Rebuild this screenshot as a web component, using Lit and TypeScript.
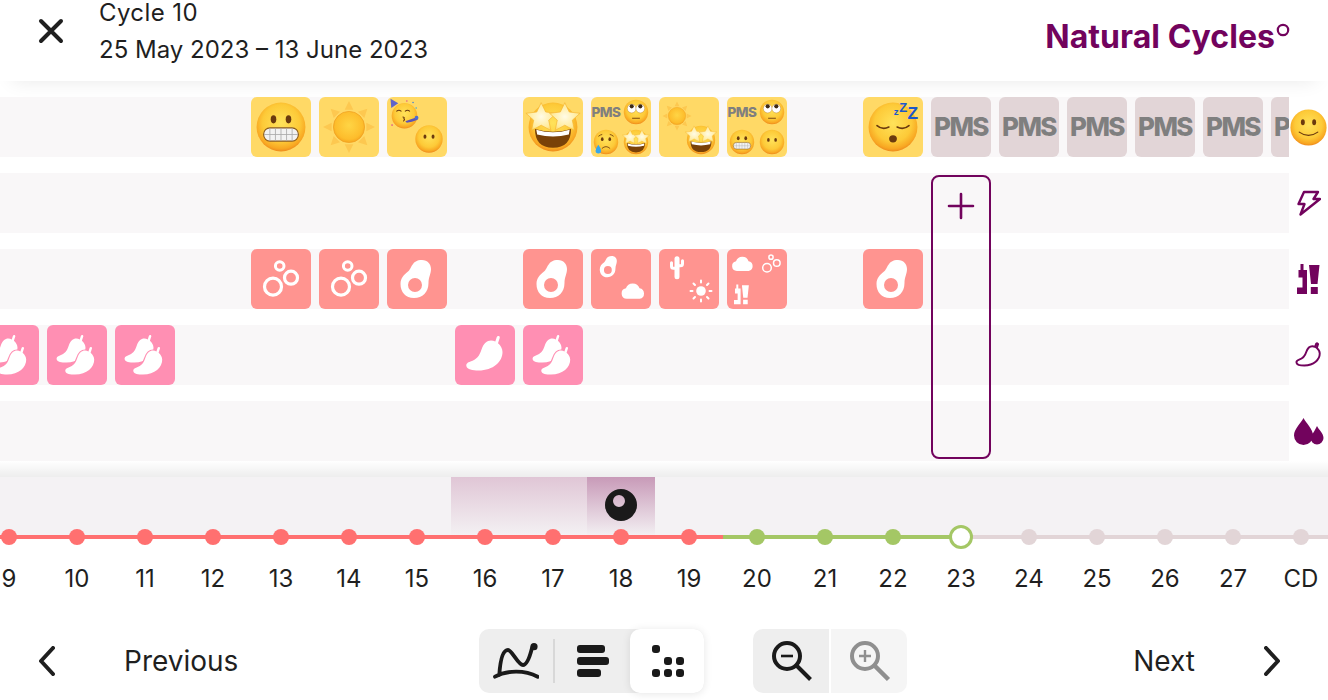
import { LitElement, html, svg, css } from "lit";
import { customElement } from "lit/decorators.js";

const FACE = "url(#face)";
const eyes = svg`<ellipse cx="12.6" cy="12.5" rx="2" ry="2.9" fill="#6b3a0e"/><ellipse cx="23.4" cy="12.5" rx="2" ry="2.9" fill="#6b3a0e"/>`;
const disc = svg`<circle cx="18" cy="18" r="17.6" fill="${FACE}"/>`;
const star = (cx: number, cy: number) => svg`<path transform="translate(${cx} ${cy})" d="M0-10.5 3.2-3.8 11-2.9 5.4 2.1 7 9.500 0 5.700-7 9.500-5.400 2.100-11-2.900-3.200-3.800Z" fill="url(#star)" stroke="#f7b733" stroke-width=".5" stroke-linejoin="round"/>`;

const EMOJI: Record<string, unknown> = {
  grimace: svg`${disc}${eyes}<rect x="5.5" y="18.6" width="25" height="9.6" rx="4.6" fill="#f2f2f2" stroke="#8a5a1a" stroke-width=".8"/><path d="M5.8 23.4h24.4M10 18.8v9.2M14 18.7v9.4M18 18.7v9.4M22 18.7v9.4M26 18.8v9.2" stroke="#a9a9a9" stroke-width=".6"/>`,
  sun: svg`<g fill="#fdc850"><path d="M18 0 21 6H15ZM18 36 15 30H21ZM0 18 6 15V21ZM36 18 30 21V15ZM5.3 5.3 11.8 7.4 7.4 11.8ZM30.7 30.7 24.2 28.6 28.6 24.2ZM30.7 5.3 28.6 11.8 24.2 7.4ZM5.3 30.7 7.4 24.2 11.8 28.6Z"/></g><circle cx="18" cy="18" r="10.8" fill="url(#sun)" stroke="#f0a020" stroke-width=".5"/>`,
  blank: svg`${disc}<ellipse cx="12.8" cy="15" rx="1.9" ry="2.7" fill="#6b3a0e"/><ellipse cx="23.2" cy="15" rx="1.9" ry="2.7" fill="#6b3a0e"/>`,
  party: svg`<circle cx="18" cy="19" r="16.5" fill="${FACE}"/><path d="M8 13q2.8-2.4 5.6 0M19 13q2.8-2.4 5.6 0" fill="none" stroke="#6b3a0e" stroke-width="1.3" stroke-linecap="round"/><path d="M16 20.5q3 1 1 2.4q2.4 1 -.4 2.8" fill="none" stroke="#6b3a0e" stroke-width="1.3" stroke-linecap="round"/><path d="M0 -3 10 3 1 9Z" fill="#5f63c9"/><path d="M19 26q6-2 15-5l1 3q-8 3-14 4Z" fill="#5c55b5"/><circle cx="33.5" cy="21.5" r="2.4" fill="#4d6ed0"/><circle cx="29" cy="2" r="1" fill="#3a84d8"/><circle cx="21" cy="0" r="1" fill="#e0588a"/><circle cx="2" cy="31" r="1" fill="#d8389a"/><circle cx="33" cy="9" r="1" fill="#3fa8d8"/>`,
  starry: svg`${disc}<path d="M5 19.500q13 4 26 0Q31 33 18 33T5 19.500Z" fill="#7a4208"/><path d="M6 20q12 3.600 24 0l-.6 3.400q-11.400 2.800-22.800 0Z" fill="#fff"/>${star(9.5, 11)}${star(26.5, 11)}`,
  roll: svg`${disc}<circle cx="11.800" cy="13" r="6.300" fill="#fff" stroke="#a86a1a" stroke-width=".5"/><circle cx="24.200" cy="13" r="6.300" fill="#fff" stroke="#a86a1a" stroke-width=".5"/><circle cx="11.800" cy="9.800" r="3" fill="#3e2a14"/><circle cx="24.200" cy="9.800" r="3" fill="#3e2a14"/><path d="M13 27h10" stroke="#6b3a0e" stroke-width="1.300" stroke-linecap="round"/>`,
  cry: svg`${disc}<ellipse cx="12.600" cy="14" rx="1.900" ry="2.700" fill="#6b3a0e"/><ellipse cx="23.400" cy="14" rx="1.900" ry="2.700" fill="#6b3a0e"/><path d="M7.500 9.500q2.500-2 4.500-2.300M28.500 9.500q-2.500-2-4.500-2.300M12.500 27q5.500-5 11 0" fill="none" stroke="#6b3a0e" stroke-width="1.200" stroke-linecap="round"/><path d="M7 22q4 5.500 4 8.500a4 4 0 0 1-8 0Q3 27.500 7 22Z" fill="#36a6ea"/>`,
  sleep: svg`${disc}<path d="M6.500 17q4 3.400 8.500 1M29.500 17q-4 3.400-8.500 1" fill="none" stroke="#6b3a0e" stroke-width="1.200" stroke-linecap="round"/><ellipse cx="18" cy="26.500" rx="2.800" ry="2.600" fill="#6b3a0e"/><text class="zzz" x="18.500" y="9.500" font-size="7">z</text><text class="zzz" x="22.500" y="7.500" font-size="9.500">Z</text><text class="zzz" x="28.500" y="12" font-size="12.500">Z</text>`,
  smile: svg`${disc}<ellipse cx="12.500" cy="12.800" rx="1.900" ry="2.900" fill="#6b3a0e"/><ellipse cx="23.500" cy="12.800" rx="1.900" ry="2.900" fill="#6b3a0e"/><path d="M9 22.500q9 6.500 18 0" fill="none" stroke="#6b3a0e" stroke-width="1.200" stroke-linecap="round"/>`,
};

const em = (name: string, cx: number, cy: number, size: number) =>
  svg`<g transform="translate(${cx - size / 2} ${cy - size / 2}) scale(${size / 36})">${EMOJI[name]}</g>`;

const AVOCADO = "M35 11c5.500 0 9 4 9 9 0 5-2.500 8-2.500 14 0 9-6 15-14.500 15s-13.500-6-13.500-14c0-6 3.500-9.500 7.500-12.500 4-3 3.500-11.500 14-11.500zM28 29a7 7 0 1 0 0 14 7 7 0 0 0 0-14z";
const CHILI = "M11.500 41.500c-.8-2.500 1-4 4-5 6-2 9-5.500 11-12 2-6 5.500-9 9.500-9 1.500 0 3 .4 4.300 1.100l1.500-4.700c.3-.8 1.200-1.200 2-.9s1.200 1.200.9 2l-1.700 5.200c2.700 2.200 4.500 5.300 4.500 8.800 0 9.500-9 18.500-24 18.500-6 0-11.300-1.400-12-4z";
const CLOUD = "M5.500 17a5.500 5.500 0 0 1-.9-10.900A7.500 7.500 0 0 1 18.800 6 5.600 5.600 0 0 1 19 17z";
const BOTTLE = "M3.500 0h3v6H10v24H0v-6.500h5.500V13.500H1.500V6h2zM12 1h10.500l-2 19h-6.500zM13.800 23h7v7h-7z";

const ic = {
  bubbles: svg`<g fill="none" stroke="#fff"><circle cx="22" cy="37.700" r="8.500" stroke-width="3.200"/><circle cx="40" cy="28.700" r="6.500" stroke-width="3.200"/><circle cx="28.700" cy="17" r="4.300" stroke-width="3"/></g>`,
  avocado: svg`<path d="${AVOCADO}" fill="#fff" fill-rule="evenodd"/>`,
  chili: svg`<path d="${CHILI}" fill="#fff"/>`,
  chili2: svg`<path d="${CHILI}" fill="#fff" transform="translate(.5 1.200) scale(.8)"/><path d="${CHILI}" fill="#fff" stroke="#ff8fb3" stroke-width="3" paint-order="stroke" transform="translate(9.200 13.200) scale(.8)"/>`,
  cloudSmall: svg`<path d="${CLOUD}" fill="#fff" transform="translate(30.500 33.500) scale(.96)"/>`,
  avoSmall: svg`<path d="${AVOCADO}" fill="#fff" fill-rule="evenodd" transform="translate(1.200 .8) scale(.56)"/>`,
  cactus: svg`<g transform="translate(10.500 7.800)" fill="none" stroke="#fff" stroke-linecap="round"><path d="M7.500 2v18" stroke-width="5"/><path d="M2 6v3.500a2 2 0 0 0 2 2h3M13 4v3a2 2 0 0 1-2 2H8" stroke-width="3"/></g>`,
  sunSmall: svg`<g transform="translate(42 42)"><circle r="4.800" fill="#fff"/><g stroke="#fff" stroke-width="2" stroke-linecap="round"><path d="M0-8.500v-2M0 8.500v2M-8.500 0h-2M8.500 0h2M-6-6l-1.500-1.500M6 6l1.500 1.500M6-6l1.500-1.500M-6 6l-1.500 1.500"/></g></g>`,
  cloudTop: svg`<path d="${CLOUD}" fill="#fff" transform="translate(5 7) scale(.88)"/>`,
  bubblesSmall: svg`<g fill="none" stroke="#fff" stroke-width="1.500"><circle cx="40" cy="18.800" r="4.300"/><circle cx="49.800" cy="14" r="3.300"/><circle cx="44" cy="8.200" r="2.100"/></g>`,
  bottle: svg`<path d="${BOTTLE}" fill="#fff" transform="translate(7 35.500) scale(.66)"/>`,
};

type Cell = { kind: string; art?: unknown };
const Y = "yellow", P = "pms", R = "red", K = "pink";
const pmsSmall = svg`<text class="pms-small" x="15" y="19.500" text-anchor="middle">PMS</text>`;

const mood: Record<number, Cell> = {
  13: { kind: Y, art: em("grimace", 30, 30, 50) },
  14: { kind: Y, art: em("sun", 30, 30, 52) },
  15: { kind: Y, art: svg`${em("party", 17.5, 18, 28)}${em("blank", 42, 42, 28)}` },
  17: { kind: Y, art: svg`${em("starry", 30, 30, 50)}` },
  18: { kind: Y, art: svg`${pmsSmall}${em("roll", 45, 15, 25)}${em("cry", 15, 45, 25)}${em("starry", 45, 45, 25)}` },
  19: { kind: Y, art: svg`${em("sun", 18, 19, 29)}${em("starry", 42, 43, 29)}` },
  20: { kind: Y, art: svg`${pmsSmall}${em("roll", 45, 15, 25)}${em("grimace", 15, 45, 25)}${em("blank", 45, 45, 25)}` },
  22: { kind: Y, art: em("sleep", 30, 30, 50) },
  23: { kind: P }, 24: { kind: P }, 25: { kind: P }, 26: { kind: P }, 27: { kind: P }, 28: { kind: P },
};
const notes: Record<number, Cell> = {
  13: { kind: R, art: ic.bubbles },
  14: { kind: R, art: ic.bubbles },
  15: { kind: R, art: ic.avocado },
  17: { kind: R, art: ic.avocado },
  18: { kind: R, art: svg`${ic.avoSmall}${ic.cloudSmall}` },
  19: { kind: R, art: svg`${ic.cactus}${ic.sunSmall}` },
  20: { kind: R, art: svg`${ic.cloudTop}${ic.bubblesSmall}${ic.bottle}` },
  22: { kind: R, art: ic.avocado },
};
const libido: Record<number, Cell> = {
  9: { kind: K, art: ic.chili2 }, 10: { kind: K, art: ic.chili2 }, 11: { kind: K, art: ic.chili2 },
  16: { kind: K, art: ic.chili }, 17: { kind: K, art: ic.chili2 },
};
const rows: Record<number, Cell>[] = [mood, {}, notes, libido, {}];
const DAYS = Array.from({ length: 20 }, (_, i) => 9 + i);

@customElement("app-root")
export class AppRoot extends LitElement {
  static styles = css`
    :host { display: flex; flex-direction: column; width: 1328px; height: 700px; overflow: hidden; background: #fff;
      font-family: Inter, "Liberation Sans", sans-serif; color: #1f1f1f; }
    .defs { width: 0; height: 0; position: absolute; }
    header { height: 81px; flex: none; display: flex; align-items: flex-start; background: #fff; position: relative; z-index: 2;
      box-shadow: 0 12px 18px -12px rgba(0,0,0,.09); }
    .close { width: 30px; height: 30px; margin: 16px 33px 0 36px; flex: none; }
    .title { font-size: 24px; white-space: nowrap; }
    .title .t1 { line-height: 26px; letter-spacing: .4px; }
    .title .t2 { line-height: 36px; margin-top: 6px; }
    .logo { margin-left: auto; margin-right: 38px; margin-top: 18px; display: flex; align-items: flex-start; color: #72035d;
      font-size: 32px; font-weight: 700; line-height: 38px; white-space: nowrap; letter-spacing: .05px; }
    .logo svg { width: 14px; height: 14px; margin: 5px 0 0 1px; }
    main { flex: none; height: 380px; padding-top: 16px; box-sizing: border-box; display: grid; grid-template-columns: 1289px 39px; }
    .rows { position: relative; display: flex; flex-direction: column; gap: 16px; overflow: hidden; }
    .row { height: 60px; background: #f9f7f8; }
    .track { display: flex; gap: 8px; margin-left: -21px; }
    .slot { width: 60px; height: 60px; flex: none; }
    .cell { width: 60px; height: 60px; border-radius: 6px; display: block; }
    .yellow { background: #ffd966; }
    .pms { background: #e2d5d7; }
    .red { background: #ff9490; }
    .pink { background: #ff8fb3; }
    .pms-text { font-size: 26px; font-weight: 800; fill: #7f7f7f; letter-spacing: -1.600px; }
    .pms-small { font-size: 13.500px; font-weight: 800; fill: #7f7f7f; letter-spacing: -.5px; }
    .zzz { font-weight: 700; fill: #1c57c9; font-family: "Liberation Sans", sans-serif; }
    .selected { position: absolute; left: 931px; top: 78px; width: 60px; height: 284px; box-sizing: border-box; border: 2px solid #72035d;
      border-radius: 8px; display: flex; justify-content: center; padding-top: 15px; }
    .selected svg { width: 28px; height: 28px; }
    .side { display: flex; flex-direction: column; gap: 16px; }
    .side div { height: 60px; display: flex; align-items: center; justify-content: center; color: #72035d; }
    .strip { height: 16px; flex: none; background: linear-gradient(to bottom, rgba(0,0,0,0), rgba(0,0,0,.07)); }
    .timeline { display: flex; margin-left: -25px; flex: none; }
    .day { width: 68px; flex: none; display: flex; flex-direction: column; align-items: center; }
    .band { width: 100%; height: 60px; background: #f4f2f4; display: flex; align-items: center; justify-content: center; }
    .band.fert { background: linear-gradient(to bottom, #e0c6d6, #f4f2f4); }
    .band.ovu { background: linear-gradient(to bottom, #c89ab8, #f4f2f4); }
    .band svg { width: 32px; height: 32px; margin-top: -4px; }
    .axis { width: 100%; height: 4px; margin-top: -2px; display: flex; align-items: center; justify-content: center; }
    .axis i { width: 16px; height: 16px; border-radius: 50%; flex: none; }
    .axis i.now { width: 24px; height: 24px; box-sizing: border-box; background: #fff; border: 3px solid #a4c765; }
    .a-red { background: #ff7070; }
    .a-green { background: #a4c765; }
    .a-grey { background: #e2d5d7; }
    .axis.half { background: linear-gradient(to right, #a4c765 50%, #e2d5d7 50%); }
    .label { margin-top: 25px; height: 30px; line-height: 30px; font-size: 24px; text-align: center; white-space: nowrap; }
    footer { margin-top: 35px; flex: none; height: 64px; display: flex; align-items: center; font-size: 28px; }
    .prev { width: 479px; padding-left: 39px; box-sizing: border-box; display: flex; align-items: center; gap: 69px; flex: none; }
    .chev { width: 16px; height: 30px; flex: none; }
    .seg { width: 225px; height: 64px; border-radius: 10px; background: #eeeeee; display: flex; align-items: stretch; flex: none; margin-right: 49px; }
    .seg > div { display: flex; align-items: center; justify-content: center; }
    .seg .a { width: 74px; }
    .seg .line { width: 2px; margin: 10px 0; background: #d8d8d8; flex: none; }
    .seg .b { width: 75px; }
    .seg .c { width: 74px; box-sizing: border-box; padding-left: 2px; background: #fff; border-radius: 10px; box-shadow: 0 1px 8px rgba(0,0,0,.1); }
    .zoom { display: flex; gap: 2px; height: 64px; flex: none; }
    .zoom > div { width: 76px; background: #eeeeee; border-radius: 10px 0 0 10px; display: flex; align-items: center; justify-content: center; }
    .zoom > div + div { background: #f5f5f5; border-radius: 0 10px 10px 0; }
    .zoom svg { margin-top: -2px; }
    .next { margin-left: auto; padding-right: 48px; display: flex; align-items: center; gap: 69px; }
  `;

  private cell(c?: Cell) {
    if (!c) return html`<div class="slot"></div>`;
    const inner = c.kind === "pms"
      ? svg`<text class="pms-text" x="30" y="39" text-anchor="middle">PMS</text>`
      : c.art;
    return html`<div class="slot"><svg class="cell ${c.kind}" viewBox="0 0 60 60">${inner}</svg></div>`;
  }

  render() {
    return html`
      <svg class="defs" aria-hidden="true"><defs>
        <radialGradient id="face" cx=".5" cy=".42" r=".58">
          <stop offset="0" stop-color="#ffe25a"/><stop offset=".65" stop-color="#fdca38"/><stop offset=".9" stop-color="#f8a722"/><stop offset="1" stop-color="#ee8a1c"/>
        </radialGradient>
        <radialGradient id="sun" cx=".5" cy=".45" r=".55">
          <stop offset="0" stop-color="#ffd545"/><stop offset=".8" stop-color="#fdbd2c"/><stop offset="1" stop-color="#f6a720"/>
        </radialGradient>
        <radialGradient id="star" cx=".5" cy=".5" r=".6">
          <stop offset="0" stop-color="#fffbe6"/><stop offset=".7" stop-color="#ffeb9a"/><stop offset="1" stop-color="#fcd04a"/>
        </radialGradient>
      </defs></svg>

      <header>
        <svg class="close" viewBox="0 0 30 30"><path d="M5 5l20 20M25 5L5 25" stroke="#1f1f1f" stroke-width="4" stroke-linecap="round"/></svg>
        <div class="title"><div class="t1">Cycle 10</div><div class="t2">25 May 2023 – 13 June 2023</div></div>
        <div class="logo">Natural Cycles<svg viewBox="0 0 14 14"><circle cx="7" cy="7" r="5.200" fill="none" stroke="#72035d" stroke-width="2.200"/></svg></div>
      </header>

      <main>
        <div class="rows">
          ${rows.map((r) => html`<div class="row"><div class="track">${DAYS.map((d) => this.cell(r[d]))}</div></div>`)}
          <div class="selected">
            <svg viewBox="0 0 28 28"><path d="M14 2v24M2 14h24" stroke="#72035d" stroke-width="2.600" stroke-linecap="round"/></svg>
          </div>
        </div>
        <div class="side">
          <div><svg width="37" height="37" viewBox="0 0 36 36">${EMOJI.smile}</svg></div>
          <div><svg width="24" height="26" viewBox="0 0 24 26"><path d="M7 2h14l-4.500 7H23L3.500 24.500 7.500 14H1.500Z" fill="none" stroke="currentColor" stroke-width="2.400" stroke-linejoin="round"/></svg></div>
          <div><svg width="24" height="30" viewBox="0 0 24 30"><path d="${BOTTLE}" fill="currentColor"/></svg></div>
          <div><svg width="27" height="27" viewBox="9 9 42 42"><path d="${CHILI}" fill="none" stroke="currentColor" stroke-width="3"/></svg></div>
          <div><svg width="30" height="27" viewBox="0 0 30 27"><path d="M9.500 0C12 5 19 11 19 17.500a9.500 9.500 0 0 1-19 0C0 11 7 5 9.500 0ZM23 8c1.500 3.500 6.500 7 6.500 12a6.500 6.500 0 0 1-13 0c0-.4 0-.8.100-1.200C20 14 21.500 11 23 8Z" fill="currentColor"/></svg></div>
        </div>
      </main>
      <div class="strip"></div>

      <div class="timeline">
        ${DAYS.map((d) => {
          const band = d === 16 || d === 17 ? "fert" : d === 18 ? "ovu" : "";
          const col = d <= 19 ? "a-red" : d <= 23 ? "a-green" : "a-grey";
          return html`<div class="day">
            <div class="band ${band}">${d === 18
              ? html`<svg viewBox="0 0 32 32"><path fill-rule="evenodd" fill="#1a1a1a" d="M16 0a16 16 0 1 1 0 32 16 16 0 0 1 0-32zM14 6a6 6 0 1 0 0 12 6 6 0 0 0 0-12z"/></svg>`
              : ""}</div>
            <div class="axis ${d === 23 ? "half" : col}"><i class="${d === 23 ? "now" : col}"></i></div>
            <div class="label">${d === 28 ? "CD" : d}</div>
          </div>`;
        })}
      </div>

      <footer>
        <div class="prev">
          <svg class="chev" viewBox="0 0 16 30"><path d="M14 2 2 15l12 13" fill="none" stroke="#1f1f1f" stroke-width="4" stroke-linecap="round" stroke-linejoin="round"/></svg>
          <span>Previous</span>
        </div>
        <div class="seg">
          <div class="a"><svg width="46" height="38" viewBox="0 0 46 38"><path d="M2 34.700C14 28 32 28 44.700 34.700M6.300 33C7 22 9 8 15 8 19 8 25 23 30 23 34 23 37 14 39 6" fill="none" stroke="#1a1a1a" stroke-width="3.800" stroke-linecap="round" stroke-linejoin="round"/><circle cx="41" cy="4.700" r="3.600" fill="#1a1a1a"/></svg></div>
          <div class="line"></div>
          <div class="b"><svg width="32" height="32" viewBox="0 0 32 32" fill="#1a1a1a"><rect width="28" height="8" rx="3"/><rect y="12" width="32" height="8" rx="3"/><rect y="24" width="24" height="8" rx="3"/></svg></div>
          <div class="c"><svg width="32" height="32" viewBox="0 0 32 32" fill="#1a1a1a"><rect width="8" height="8" rx="3"/><rect x="12" y="12" width="8" height="8" rx="3"/><rect x="24" y="12" width="8" height="8" rx="3"/><rect y="24" width="8" height="8" rx="3"/><rect x="12" y="24" width="8" height="8" rx="3"/><rect x="24" y="24" width="8" height="8" rx="3"/></svg></div>
        </div>
        <div class="zoom">
          <div><svg width="44" height="44" viewBox="0 0 44 44" fill="none" stroke="#1a1a1a"><circle cx="18" cy="18" r="13" stroke-width="4"/><path d="M12 18h12" stroke-width="2.600"/><path d="M27.500 27.500l14 14" stroke-width="4"/></svg></div>
          <div><svg width="44" height="44" viewBox="0 0 44 44" fill="none" stroke="#8f8f8f"><circle cx="18" cy="18" r="13" stroke-width="4"/><path d="M12 18h12M18 12v12" stroke-width="2.400"/><path d="M27.500 27.500l14 14" stroke-width="4.500"/></svg></div>
        </div>
        <div class="next">
          <span>Next</span>
          <svg class="chev" viewBox="0 0 16 30"><path d="M2 2l12 13L2 28" fill="none" stroke="#1f1f1f" stroke-width="4" stroke-linecap="round" stroke-linejoin="round"/></svg>
        </div>
      </footer>
    `;
  }
}
